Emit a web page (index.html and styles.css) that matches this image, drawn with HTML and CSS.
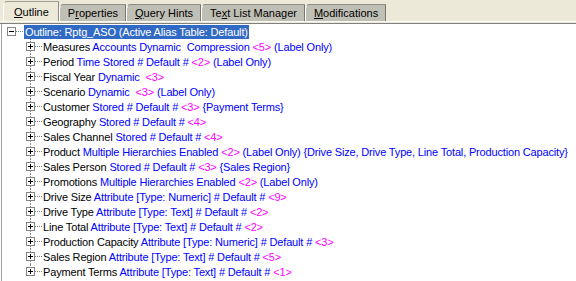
FILE: index.html
```html
<!DOCTYPE html>
<html>
  <head>
    <title>Outline</title>
    <link rel="stylesheet" href="styles.css">
  </head>
  <body>
    <div class="tabs">
      <div class="tab active"><u>O</u>utline</div>
      <div class="tab">P<u>r</u>operties</div>
      <div class="tab"><u>Q</u>uery Hints</div>
      <div class="tab">Te<u>x</u>t List Manager</div>
      <div class="tab"><u>M</u>odifications</div>
    </div>
    <div class="rule"></div>
    <div class="tree">
      <div class="row root">
        <span class="box minus"></span>
        <span class="dots"></span>
        <span class="sel">Outline: Rptg_ASO (Active Alias Table: Default)</span>
      </div>
      <div class="kids">
        <div class="row"><span class="stem"><span class="box"></span></span><span class="dots"></span><span class="text"><span class="name">Measures</span> <span class="prop">Accounts Dynamic&nbsp; Compression</span> <span class="num">&lt;5&gt;</span> <span class="prop">(Label Only)</span></span></div>
        <div class="row"><span class="stem"><span class="box"></span></span><span class="dots"></span><span class="text"><span class="name">Period</span> <span class="prop">Time Stored # Default #</span> <span class="num">&lt;2&gt;</span> <span class="prop">(Label Only)</span></span></div>
        <div class="row"><span class="stem"><span class="box"></span></span><span class="dots"></span><span class="text"><span class="name">Fiscal Year</span> <span class="prop">Dynamic&nbsp;</span> <span class="num">&lt;3&gt;</span></span></div>
        <div class="row"><span class="stem"><span class="box"></span></span><span class="dots"></span><span class="text"><span class="name">Scenario</span> <span class="prop">Dynamic&nbsp;</span> <span class="num">&lt;3&gt;</span> <span class="prop">(Label Only)</span></span></div>
        <div class="row"><span class="stem"><span class="box"></span></span><span class="dots"></span><span class="text"><span class="name">Customer</span> <span class="prop">Stored # Default #</span> <span class="num">&lt;3&gt;</span> <span class="prop">{Payment Terms}</span></span></div>
        <div class="row"><span class="stem"><span class="box"></span></span><span class="dots"></span><span class="text"><span class="name">Geography</span> <span class="prop">Stored # Default #</span> <span class="num">&lt;4&gt;</span></span></div>
        <div class="row"><span class="stem"><span class="box"></span></span><span class="dots"></span><span class="text"><span class="name">Sales Channel</span> <span class="prop">Stored # Default #</span> <span class="num">&lt;4&gt;</span></span></div>
        <div class="row"><span class="stem"><span class="box"></span></span><span class="dots"></span><span class="text"><span class="name">Product</span> <span class="prop">Multiple Hierarchies Enabled</span> <span class="num">&lt;2&gt;</span> <span class="prop">(Label Only) {Drive Size, Drive Type, Line Total, Production Capacity}</span></span></div>
        <div class="row"><span class="stem"><span class="box"></span></span><span class="dots"></span><span class="text"><span class="name">Sales Person</span> <span class="prop">Stored # Default #</span> <span class="num">&lt;3&gt;</span> <span class="prop">{Sales Region}</span></span></div>
        <div class="row"><span class="stem"><span class="box"></span></span><span class="dots"></span><span class="text"><span class="name">Promotions</span> <span class="prop">Multiple Hierarchies Enabled</span> <span class="num">&lt;2&gt;</span> <span class="prop">(Label Only)</span></span></div>
        <div class="row"><span class="stem"><span class="box"></span></span><span class="dots"></span><span class="text"><span class="name">Drive Size</span> <span class="prop">Attribute [Type: Numeric] # Default #</span> <span class="num">&lt;9&gt;</span></span></div>
        <div class="row"><span class="stem"><span class="box"></span></span><span class="dots"></span><span class="text"><span class="name">Drive Type</span> <span class="prop">Attribute [Type: Text] # Default #</span> <span class="num">&lt;2&gt;</span></span></div>
        <div class="row"><span class="stem"><span class="box"></span></span><span class="dots"></span><span class="text"><span class="name">Line Total</span> <span class="prop">Attribute [Type: Text] # Default #</span> <span class="num">&lt;2&gt;</span></span></div>
        <div class="row"><span class="stem"><span class="box"></span></span><span class="dots"></span><span class="text"><span class="name">Production Capacity</span> <span class="prop">Attribute [Type: Numeric] # Default #</span> <span class="num">&lt;3&gt;</span></span></div>
        <div class="row"><span class="stem"><span class="box"></span></span><span class="dots"></span><span class="text"><span class="name">Sales Region</span> <span class="prop">Attribute [Type: Text] # Default #</span> <span class="num">&lt;5&gt;</span></span></div>
        <div class="row"><span class="stem"><span class="box"></span></span><span class="dots"></span><span class="text"><span class="name">Payment Terms</span> <span class="prop">Attribute [Type: Text] # Default #</span> <span class="num">&lt;1&gt;</span></span></div>
      </div>
    </div>
  </body>
</html>
```

FILE: styles.css
```css
body {
  margin: 0;
  width: 576px;
  height: 281px;
  overflow: hidden;
  background: #fff;
  font-family: "Liberation Sans", Arial, sans-serif;
  font-size: 11px;
}

.tabs {
  display: flex;
  align-items: flex-end;
  height: 21px;
  padding-left: 3px;
  background-color: #ece9d8;
}

.tab {
  height: 16px;
  line-height: 16px;
  padding: 0 7px 0 8px;
  background-color: #c0bfb5;
  border-top: 1px solid #8d8d86;
  border-left: 1px solid #fff;
  border-right: 1px solid #76756f;
  border-top-left-radius: 4px 6px;
  color: #000;
}

.tab.active {
  height: 19px;
  line-height: 20px;
  padding: 0 9px 0 10px;
  background-color: #ece9d8;
  border-top-color: #a09e94;
  border-left-color: #fff;
  border-right-color: #8d8d86;
}

.rule {
  height: 1px;
  background-color: #ece9d8;
  border-top: 1px solid #fbfaf5;
  border-bottom: 1px solid #808080;
}

.tree {
  height: 257px;
  border-left: 1px solid #a0a0a0;
  margin-left: 1px;
}

.row {
  display: flex;
  align-items: center;
  height: 15px;
  white-space: pre;
  letter-spacing: -0.16px;
  color: #000;
}

.root {
  padding-left: 5px;
}

.box {
  position: relative;
  box-sizing: border-box;
  width: 9px;
  height: 9px;
  border: 1px solid #848484;
  background-color: #fff;
  flex: none;
}

.box::before {
  content: "";
  position: absolute;
  left: 1px;
  top: 3px;
  width: 5px;
  height: 1px;
  background-color: #000;
}

.box::after {
  content: "";
  position: absolute;
  left: 3px;
  top: 1px;
  width: 1px;
  height: 5px;
  background-color: #000;
}

.box.minus::after {
  display: none;
}

.dots {
  width: 7px;
  height: 0;
  border-top: 1px dotted #808080;
  margin-right: 1px;
  flex: none;
}

.sel {
  background-color: #316ac5;
  color: #fff;
  padding: 0 1px;
  line-height: 14px;
}

.kids .row {
  padding-left: 24px;
}

.stem {
  position: relative;
  display: flex;
  align-items: center;
  height: 15px;
}

.stem::before {
  content: "";
  position: absolute;
  left: 4px;
  top: 0;
  bottom: 0;
  border-left: 1px dotted #808080;
}

.kids .row:last-child .stem::before {
  bottom: 7px;
}

.name {
  color: #000;
}

.prop {
  color: #0000ff;
}

.num {
  color: #ff00ff;
}
```
